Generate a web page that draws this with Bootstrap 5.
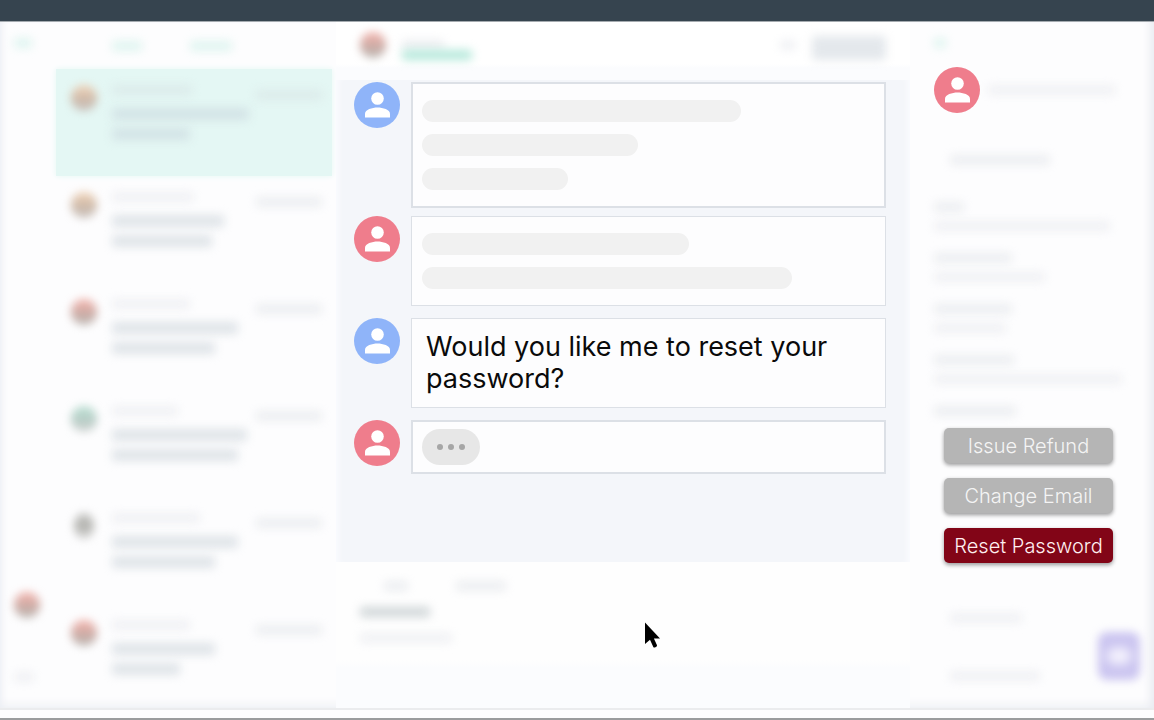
<!DOCTYPE html>
<html lang="en">
<head>
<meta charset="utf-8">
<meta name="viewport" content="width=device-width, initial-scale=1">
<title>Support inbox</title>
<link rel="stylesheet" href="https://cdn.jsdelivr.net/npm/bootstrap@5.3.0/dist/css/bootstrap.min.css">
<style>
body{font-family:Inter,"Liberation Sans",sans-serif;background:#fdfdfe;color:#0a0a0a}
.topbar{height:22px;background:#36444f;border-bottom:1px solid #a5abb0}
.page-end{height:12px;background:#fdfdfe;border-top:2px solid #ebecee;border-bottom:2px solid #9a9c9d}
.workspace{box-shadow:inset 7px 0 7px -5px #eceef4,inset -9px 0 8px -5px #e9ebf1,inset 0 -12px 10px -8px #f0f2f5}
.rail{width:56px;padding:16px 13px 26px 14px;gap:54px}
.inbox{width:280px;padding-right:4px}
.inbox-head{height:47px;padding:0 56px;gap:48px}
.details{width:244px;padding:16px 24px 0}
/* out-of-focus placeholders */
.haze{display:block;height:10px;border-radius:3px;background:#eceef1;filter:blur(5px)}
.haze-text{background:#dfe4e8;height:12px}
.haze-faint{background:#f0f1f4}
.haze-mint{background:#dff5f0}
.haze-green{background:#b4e8da}
.haze-dark{background:#d0d6d8}
.haze-button{height:24px;background:#e4e8ec}
.face{width:26px;height:26px;border-radius:50%;filter:blur(4px)}
.face-tan{background:linear-gradient(#f3d5b9,#cdb9a9 55%,#c9c5c3)}
.face-red{background:linear-gradient(#f6b3ac,#c9aca6 60%,#bcbcb8)}
.face-green{background:linear-gradient(#b9e0d3,#b9ccc6 60%,#d8d8d8)}
.face-gray{background:linear-gradient(#cacac8,#b2b2ae 50%,#dcdcdc);width:20px;margin:0 3px}
.thread{padding:16px 10px 0 15px;gap:15px;height:107px}
.thread:last-child{height:auto}
.thread .face{flex:none}
.preview{flex:1 1 0;min-width:0}
.thread .haze-text{margin-top:13px}
.thread .haze-text + .haze-text{margin-top:8px}
.thread.current{background:#e4f7f4;box-shadow:0 0 6px #e4f7f4}
.current .haze{background:#dcebea}
.current .haze-text{background:#d3e3e6}
.when{width:66px;flex:none;margin-top:5px}
.chat-head{height:58px;padding:10px 24px 0;background:linear-gradient(#fff 42px,#fbfcfe 46px)}
.chat-log{background:#f4f6fa;padding:2px 24px 0 18px;box-shadow:inset 6px 0 5px -3px #fafbfe,inset -6px 0 5px -3px #fafbfe}
.composer{height:146px;padding:19px 24px 0;gap:16px;background:linear-gradient(#fefefe 98px,#fbfcfe 106px)}
.person{width:46px;height:46px;flex:none}
.message{gap:11px;margin-bottom:12px}
.message.tight{margin-bottom:8px}
.bubble{background:#fdfdfe;border:1px solid #dce0e6;padding:16px 10px;min-width:0}
.bubble.strong-edge{border-width:2px;padding:16px 9px}
.bubble.words{font-size:27px;line-height:32px;padding:12px 14px}
.bubble.strong-edge.typing-box{padding:7px 9px}
.line{height:22px;border-radius:11px;background:#f1f1f1}
.lines{gap:12px}
.typing{width:58px;height:36px;border-radius:18px;background:#e7e7e7;gap:5px}
.typing i{width:6px;height:6px;border-radius:50%;background:#a6a6a6}
.actions{gap:15px;padding:12px 17px 50px 10px}
.action{height:35px;padding:0;border:0;border-radius:5px;font-size:20px;font-weight:300;line-height:34px;background:#b5b5b5;color:#f4f4f4;box-shadow:0 2px 4px #0006;white-space:nowrap}
.action:hover{background:#a9a9a9;color:#fff}
.action.danger,.action.danger:hover{background:#820517;color:#ffeff0}
.launcher{right:14px;bottom:28px;width:42px;height:48px;border:0;border-radius:9px;filter:blur(4px);background:radial-gradient(18px 13px,#f4f2fd 30%,#cbc5f0)}
.pointer{left:53.7%;top:59px;width:18px;height:28px}
.profile{margin:19px 0 42px}
.group-title{padding-left:16px;margin-bottom:37px}
.field{gap:9px;margin-bottom:22px}
</style>
</head>
<body>
<svg class="d-none" aria-hidden="true">
  <symbol id="person" viewBox="0 0 46 46"><circle cx="23" cy="23" r="23" fill="currentColor"/><circle cx="23.5" cy="16.5" r="6.3" fill="#fff"/><path d="M11 35.500v-3.800c0-4.100 7.200-6.300 12.500-6.300S36 27.600 36 31.700v3.800z" fill="#fff"/></symbol>
</svg>
<div class="d-flex flex-column min-vh-100">
  <header class="topbar"></header>
  <main class="workspace d-flex flex-fill">
    <nav class="rail d-flex flex-column flex-shrink-0" aria-label="Sections">
      <span class="haze haze-mint" style="width:18px"></span>
      <span class="face face-red mt-auto"></span>
      <span class="haze haze-faint" style="width:20px"></span>
    </nav>
    <section class="inbox flex-shrink-0" aria-label="Conversations">
      <div class="inbox-head d-flex align-items-center">
        <span class="haze haze-mint" style="width:30px"></span>
        <span class="haze haze-mint" style="width:42px"></span>
      </div>
      <div class="thread current d-flex">
        <span class="face face-tan"></span>
        <div class="preview"><span class="haze" style="width:80px"></span><span class="haze haze-text" style="width:137px"></span><span class="haze haze-text" style="width:78px"></span></div>
        <span class="haze when"></span>
      </div>
      <div class="thread d-flex">
        <span class="face face-tan"></span>
        <div class="preview"><span class="haze haze-faint" style="width:82px"></span><span class="haze haze-text" style="width:112px"></span><span class="haze haze-text" style="width:100px"></span></div>
        <span class="haze when"></span>
      </div>
      <div class="thread d-flex">
        <span class="face face-red"></span>
        <div class="preview"><span class="haze haze-faint" style="width:78px"></span><span class="haze haze-text" style="width:126px"></span><span class="haze haze-text" style="width:103px"></span></div>
        <span class="haze when"></span>
      </div>
      <div class="thread d-flex">
        <span class="face face-green"></span>
        <div class="preview"><span class="haze haze-faint" style="width:66px"></span><span class="haze haze-text" style="width:135px"></span><span class="haze haze-text" style="width:126px"></span></div>
        <span class="haze when"></span>
      </div>
      <div class="thread d-flex">
        <span class="face face-gray"></span>
        <div class="preview"><span class="haze haze-faint" style="width:88px"></span><span class="haze haze-text" style="width:126px"></span><span class="haze haze-text" style="width:103px"></span></div>
        <span class="haze when"></span>
      </div>
      <div class="thread d-flex">
        <span class="face face-red"></span>
        <div class="preview"><span class="haze haze-faint" style="width:78px"></span><span class="haze haze-text" style="width:103px"></span><span class="haze haze-text" style="width:68px"></span></div>
        <span class="haze when"></span>
      </div>
    </section>

    <section class="d-flex flex-column flex-fill" aria-label="Chat">
      <div class="chat-head d-flex align-items-start gap-3">
        <span class="face face-red"></span>
        <div class="d-flex flex-column pt-2 flex-fill"><span class="haze" style="width:42px"></span><span class="haze haze-green" style="width:70px"></span></div>
        <span class="haze haze-faint mt-2" style="width:16px"></span>
        <span class="haze haze-button mt-1" style="width:74px"></span>
      </div>
      <div class="chat-log flex-fill">
        <div class="message tight d-flex align-items-start">
          <svg class="person" style="color:#8fb4f9" role="img" aria-label="Agent"><use href="#person"/></svg>
          <div class="bubble strong-edge lines d-flex flex-column flex-fill">
            <div class="line" style="width:319px"></div><div class="line" style="width:216px"></div><div class="line" style="width:146px"></div>
          </div>
        </div>
        <div class="message d-flex align-items-start">
          <svg class="person" style="color:#ef7d8c" role="img" aria-label="Customer"><use href="#person"/></svg>
          <div class="bubble lines d-flex flex-column flex-fill">
            <div class="line" style="width:267px"></div><div class="line" style="width:370px"></div>
          </div>
        </div>
        <div class="message d-flex align-items-start">
          <svg class="person" style="color:#8fb4f9" role="img" aria-label="Agent"><use href="#person"/></svg>
          <div class="bubble words flex-fill">Would you like me to reset your password?</div>
        </div>
        <div class="message d-flex align-items-start">
          <svg class="person" style="color:#ef7d8c" role="img" aria-label="Customer"><use href="#person"/></svg>
          <div class="bubble strong-edge typing-box flex-fill">
            <div class="typing d-flex align-items-center justify-content-center"><i></i><i></i><i></i></div>
          </div>
        </div>
      </div>
      <div class="composer d-flex flex-column position-relative">
        <div class="d-flex ms-4 gap-5"><span class="haze" style="width:24px"></span><span class="haze" style="width:50px"></span></div>
        <span class="haze haze-dark" style="width:70px"></span>
        <span class="haze haze-faint" style="width:92px"></span>
        <svg class="pointer position-absolute" viewBox="0 0 18 28" aria-hidden="true"><path d="M1 1.500v21.500l5-4.300 3.200 7q.6 1.200 1.800.7l1.300-.6q1.100-.5.600-1.700l-3-6.600H16z" fill="#000"/></svg>
      </div>
    </section>

    <aside class="details position-relative flex-shrink-0" aria-label="Customer details">
      <span class="haze haze-mint" style="width:12px"></span>
      <div class="profile d-flex align-items-center gap-2">
        <svg class="person" style="color:#ef7d8c" role="img" aria-label="Customer"><use href="#person"/></svg>
        <span class="haze haze-faint" style="width:127px"></span>
      </div>
      <div class="group-title"><span class="haze" style="width:100px"></span></div>
      <div class="field d-grid"><span class="haze" style="width:30px"></span><span class="haze haze-faint" style="width:176px"></span></div>
      <div class="field d-grid"><span class="haze" style="width:78px"></span><span class="haze haze-faint" style="width:111px"></span></div>
      <div class="field d-grid"><span class="haze" style="width:78px"></span><span class="haze haze-faint" style="width:72px"></span></div>
      <div class="field d-grid"><span class="haze" style="width:80px"></span><span class="haze haze-faint" style="width:188px"></span></div>
      <span class="haze" style="width:82px"></span>
      <div class="actions d-grid">
        <button type="button" class="btn action">Issue Refund</button>
        <button type="button" class="btn action">Change Email</button>
        <button type="button" class="btn action danger">Reset Password</button>
      </div>
      <div class="ps-3"><span class="haze haze-faint mb-5" style="width:72px"></span><span class="haze haze-faint" style="width:90px"></span></div>
      <button type="button" class="launcher position-absolute" aria-label="Open messenger"></button>
    </aside>
  </main>
  <footer class="page-end"></footer>
</div>
<script src="https://cdn.jsdelivr.net/npm/bootstrap@5.3.0/dist/js/bootstrap.bundle.min.js"></script>
</body>
</html>
